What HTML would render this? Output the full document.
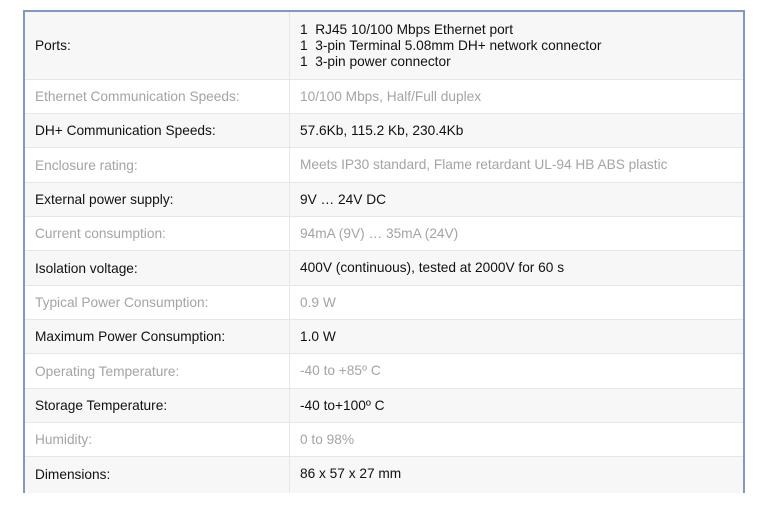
<!DOCTYPE html>
<html><head><style>
html,body{margin:0;padding:0;background:#fff;width:768px;height:509px;overflow:hidden}
.box{position:absolute;left:23px;top:10px;width:718px;height:481px;border:2px solid #8099c4;border-bottom:none;overflow:hidden}
.r{position:absolute;left:0;width:718px;border-bottom:1px solid #e6e6e6;font-family:"Liberation Sans",sans-serif;font-size:13.7px}
.r.s{background:#f7f7f7;color:#111}
.r.w{background:#fff;color:#a4a4a4}
.a,.b{position:absolute;top:0;bottom:0;display:flex;align-items:center}
.a{left:10px}
.b{left:275px;line-height:16px}
.d{position:absolute;left:264px;top:0;bottom:0;width:1px;background:#e6e6e6}
</style></head><body>
<div class="box">
<div class="r s" style="top:0;height:67px"><div class="a">Ports:</div><div class="d"></div><div class="b"><div>1&nbsp; RJ45 10/100 Mbps Ethernet port<br>1&nbsp; 3-pin Terminal 5.08mm DH+ network connector<br>1&nbsp; 3-pin power connector</div></div></div>
<div class="r w" style="top:68px;height:33px"><div class="a">Ethernet Communication Speeds:</div><div class="d"></div><div class="b">10/100 Mbps, Half/Full duplex</div></div>
<div class="r s" style="top:102px;height:33px"><div class="a">DH+ Communication Speeds:</div><div class="d"></div><div class="b">57.6Kb, 115.2 Kb, 230.4Kb</div></div>
<div class="r w" style="top:136px;height:34px"><div class="a">Enclosure rating:</div><div class="d"></div><div class="b">Meets IP30 standard, Flame retardant UL-94 HB ABS plastic</div></div>
<div class="r s" style="top:171px;height:33px"><div class="a">External power supply:</div><div class="d"></div><div class="b">9V … 24V DC</div></div>
<div class="r w" style="top:205px;height:33px"><div class="a">Current consumption:</div><div class="d"></div><div class="b">94mA (9V) … 35mA (24V)</div></div>
<div class="r s" style="top:239px;height:34px"><div class="a">Isolation voltage:</div><div class="d"></div><div class="b">400V (continuous), tested at 2000V for 60 s</div></div>
<div class="r w" style="top:274px;height:33px"><div class="a">Typical Power Consumption:</div><div class="d"></div><div class="b">0.9 W</div></div>
<div class="r s" style="top:308px;height:33px"><div class="a">Maximum Power Consumption:</div><div class="d"></div><div class="b">1.0 W</div></div>
<div class="r w" style="top:342px;height:34px"><div class="a">Operating Temperature:</div><div class="d"></div><div class="b">-40 to +85º C</div></div>
<div class="r s" style="top:377px;height:33px"><div class="a">Storage Temperature:</div><div class="d"></div><div class="b">-40 to+100º C</div></div>
<div class="r w" style="top:411px;height:33px"><div class="a">Humidity:</div><div class="d"></div><div class="b">0 to 98%</div></div>
<div class="r s" style="top:445px;height:40px;border-bottom:none"><div class="a" style="bottom:6px">Dimensions:</div><div class="d"></div><div class="b" style="bottom:6px">86 x 57 x 27 mm</div></div>
</div>
</body></html>
